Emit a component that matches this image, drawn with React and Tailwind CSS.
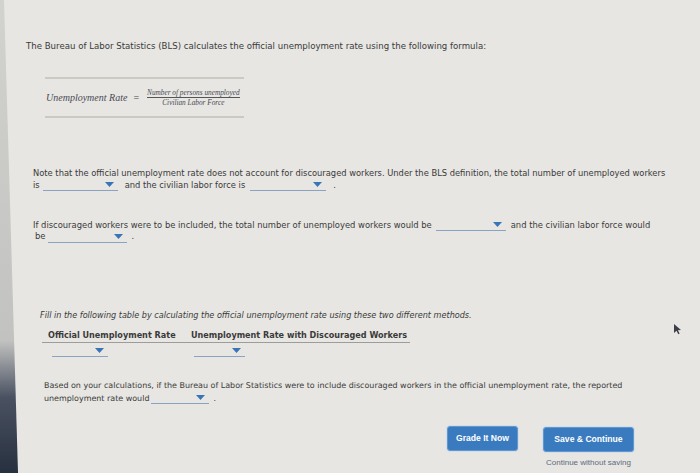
// App.jsx

const body = { fontFamily: '"DejaVu Sans", Verdana, sans-serif' };
const serif = { fontFamily: '"Liberation Serif", "Times New Roman", serif' };
const arial = { fontFamily: '"Liberation Sans", Arial, sans-serif' };

function Dropdown({ w }) {
  return (
    <span
      className="inline-flex h-[12px] items-center justify-end border-b border-[#8aa3c2] pr-[4px] shrink-0 align-top"
      style={{ width: w }}
    >
      <svg width="9" height="5" viewBox="0 0 9 5">
        <path d="M0 0 L9 0 L4.5 5 Z" fill="#3a74b8" />
      </svg>
    </span>
  );
}

export default function App() {
  return (
    <div className="relative w-[700px] h-[473px] overflow-hidden bg-[#e7e6e2] text-[#3a3a3a]" style={body}>
      {/* photo edge on the left */}
      <svg className="absolute left-0 top-0" width="20" height="473" viewBox="0 0 20 473">
        <defs>
          <linearGradient id="edge" x1="0" y1="0" x2="0" y2="1">
            <stop offset="0" stopColor="#d2d2cf" />
            <stop offset="0.72" stopColor="#c2c2c0" />
            <stop offset="0.84" stopColor="#4a5262" />
            <stop offset="1" stopColor="#27303f" />
          </linearGradient>
        </defs>
        <polygon points="0,0 4,0 18,473 0,473" fill="url(#edge)" />
      </svg>

      <div className="pl-[26px] pt-[40px]">
        <div className="text-[8.6px] leading-[12px] whitespace-nowrap">
          The Bureau of Labor Statistics (BLS) calculates the official unemployment rate using the following formula:
        </div>

        {/* Formula */}
        <div className="ml-[19px] mt-[25px] w-[199px] border-y-2 border-[#cac9c2]">
          <div className="flex h-[37px] items-center pl-[1px] text-[#4a4a55]" style={serif}>
            <span className="italic text-[10px]">Unemployment Rate</span>
            <span className="ml-[6px] text-[10px]">=</span>
            <div className="ml-[8px] flex flex-col items-center">
              <span className="italic text-[7.3px] leading-[9px] whitespace-nowrap">Number of persons unemployed</span>
              <span className="w-full border-t border-[#555]" />
              <span className="italic text-[7.3px] leading-[9px] whitespace-nowrap">Civilian Labor Force</span>
            </div>
          </div>
        </div>

        {/* Paragraph 2 */}
        <div className="ml-[7px] mt-[49px] text-[8.34px]">
          <div className="leading-[12px] whitespace-nowrap">
            Note that the official unemployment rate does not account for discouraged workers. Under the BLS definition, the total number of unemployed workers
          </div>
          <div className="flex items-start leading-[12px] whitespace-nowrap">
            <span>is</span>
            <span className="ml-[3px] flex"><Dropdown w={75} /></span>
            <span className="ml-[7px]">and the civilian labor force is</span>
            <span className="ml-[5px] flex"><Dropdown w={76} /></span>
            <span className="ml-[7px]">.</span>
          </div>
        </div>

        {/* Paragraph 3 */}
        <div className="ml-[7px] mt-[28px] text-[8.4px]">
          <div className="flex items-start leading-[12px] whitespace-nowrap">
            <span>If discouraged workers were to be included, the total number of unemployed workers would be</span>
            <span className="ml-[4px] flex"><Dropdown w={70} /></span>
            <span className="ml-[5px]">and the civilian labor force would</span>
          </div>
          <div className="flex items-start leading-[11px] whitespace-nowrap">
            <span className="ml-[2px]">be</span>
            <span className="ml-[3px] flex"><Dropdown w={79} /></span>
            <span className="ml-[4px]">.</span>
          </div>
        </div>

        {/* Table */}
        <div className="ml-[14px] mt-[66px] text-[8.1px] italic leading-[12px] whitespace-nowrap">
          Fill in the following table by calculating the official unemployment rate using these two different methods.
        </div>
        <div className="ml-[16px] mt-[8px] w-[368px]">
          <div className="flex h-[14px] items-start border-b border-[#9c9c9a] text-[8.1px] font-bold leading-[12px] whitespace-nowrap">
            <div className="w-[143px] pl-[6px]">Official Unemployment Rate</div>
            <div className="pl-[6px]">Unemployment Rate with Discouraged Workers</div>
          </div>
          <div className="flex h-[15px] items-start pt-[2px]">
            <div className="flex w-[143px] pl-[10px]"><Dropdown w={56} /></div>
            <div className="flex pl-[9px]"><Dropdown w={51} /></div>
          </div>
        </div>

        {/* Conclusion */}
        <div className="ml-[18px] mt-[21px] text-[7.98px]">
          <div className="leading-[13px] whitespace-nowrap">
            Based on your calculations, if the Bureau of Labor Statistics were to include discouraged workers in the official unemployment rate, the reported
          </div>
          <div className="flex items-start leading-[13px] whitespace-nowrap">
            <span>unemployment rate would</span>
            <span className="ml-[2px] flex"><Dropdown w={58} /></span>
            <span className="ml-[4px]">.</span>
          </div>
        </div>

        {/* Buttons */}
        <div className="ml-[421px] mt-[21px] flex items-start gap-[25px]" style={arial}>
          <button className="h-[25px] w-[71px] rounded-[3px] border border-[#5f98d2] bg-[#3a7bbf] text-[8.6px] font-bold text-white shadow-[0_0_0_1px_#d8dde3]">
            Grade It Now
          </button>
          <div className="mt-[1px] flex flex-col items-center">
            <button className="h-[25px] w-[91px] rounded-[3px] border border-[#5f98d2] bg-[#3a7bbf] text-[8.6px] font-bold text-white shadow-[0_0_0_1px_#d8dde3]">
              Save &amp; Continue
            </button>
            <span className="mt-[6px] text-[8px] leading-[10px] text-[#5b6b80] whitespace-nowrap">Continue without saving</span>
          </div>
        </div>
      </div>

      {/* mouse pointer */}
      <svg className="absolute left-[673px] top-[323px]" width="9" height="12" viewBox="0 0 9 12">
        <path d="M1 1 L1 10 L3.5 7.8 L5.3 11.2 L6.6 10.5 L4.9 7.2 L8 7 Z" fill="#3c3f4a" />
      </svg>
    </div>
  );
}
